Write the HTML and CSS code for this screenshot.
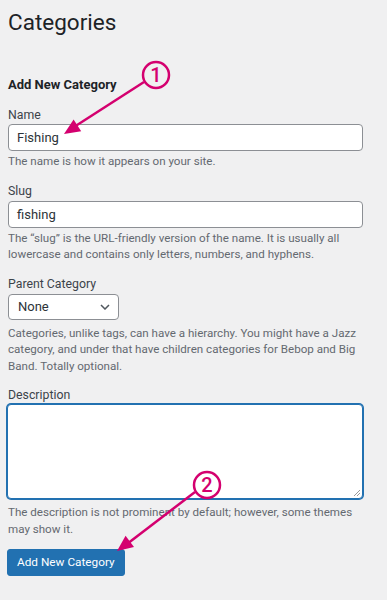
FILE: index.html
```html
<!DOCTYPE html>
<html>
<head>
<meta charset="utf-8">
<link rel="stylesheet" href="styles.css">
</head>
<body>
<div class="page">
  <h1 class="title">Categories</h1>
  <h2 class="subtitle">Add New Category</h2>
  <div class="field">
    <label class="label">Name</label>
    <div class="input">Fishing</div>
    <p class="help">The name is how it appears on your site.</p>
  </div>
  <div class="field">
    <label class="label">Slug</label>
    <div class="input">fishing</div>
    <p class="help">The “slug” is the URL-friendly version of the name. It is usually all lowercase and contains only letters, numbers, and hyphens.</p>
  </div>
  <div class="field">
    <label class="label">Parent Category</label>
    <div class="select"><span>None</span>
      <svg class="chev" width="10" height="6" viewBox="0 0 10 6"><path d="M1 1 L5 5 L9 1" fill="none" stroke="#50575e" stroke-width="1.5"/></svg>
    </div>
    <p class="help help-loose">Categories, unlike tags, can have a hierarchy. You might have a Jazz category, and under that have children categories for Bebop and Big Band. Totally optional.</p>
  </div>
  <div class="field">
    <label class="label">Description</label>
    <div class="textarea">
      <svg class="grip" width="8" height="8" viewBox="0 0 8 8"><path d="M7 1 L1 7 M7 4 L4 7" stroke="#9a9a9a" stroke-width="1"/></svg>
    </div>
    <p class="help help-loose">The description is not prominent by default; however, some themes may show it.</p>
  </div>
  <button class="btn">Add New Category</button>
</div>
<svg class="annot" width="387" height="600" viewBox="0 0 387 600">
  <g fill="none" stroke="#d4006f" stroke-width="2.5">
    <circle cx="156" cy="75" r="13"/>
    <line x1="144" y1="82" x2="74" y2="127"/>
    <circle cx="207" cy="485" r="13"/>
    <line x1="195" y1="492" x2="127" y2="544"/>
  </g>
  <g fill="#d4006f">
    <polygon points="64,134 73.6,119.5 81.2,131.3"/>
    <polygon points="117,551 125.6,535.8 134,547"/>
  </g>
  <text x="156" y="82" class="num">1</text>
  <text x="207" y="492" class="num">2</text>
</svg>
</body>
</html>
```
FILE: styles.css
```css
html, body { margin: 0; padding: 0; background: #f0f0f1; }
body { width: 387px; height: 600px; overflow: hidden; position: relative; font-family: Roboto, "Noto Sans", sans-serif; }
.page { padding: 7px 8px 0; }
.title { margin: 0; font-size: 22.5px; font-weight: 400; color: #1d2327; line-height: 30px; }
.subtitle { margin: 38px 0 0; font-size: 13px; font-weight: 700; color: #1d2327; line-height: 20px; }
.field { margin-top: 11px; }
.field + .field { margin-top: 12px; }
.label { display: block; font-size: 12.3px; color: #3c434a; line-height: 18px; }
.input { box-sizing: border-box; width: 355px; height: 27px; border: 1px solid #8c8f94; border-radius: 4px; background: #fff; font-size: 13px; color: #2c3338; line-height: 25px; padding-left: 8px; }
.field + .field .input { margin-top: 1px; }
.help { margin: 2px 0 0; font-size: 11.6px; color: #646970; line-height: 16.5px; width: 362px; }
.help-loose { margin-top: 5px; }
.select { box-sizing: border-box; width: 111px; height: 26px; margin-top: 1px; border: 1px solid #8c8f94; border-radius: 4px; background: #fff; font-size: 13px; color: #2c3338; line-height: 24px; padding: 0 8px 0 9px; display: flex; justify-content: space-between; align-items: center; }
.textarea { box-sizing: border-box; position: relative; width: 356px; height: 95px; margin-left: -1px; border: 1px solid #2271b1; box-shadow: 0 0 0 1px #2271b1; border-radius: 4px; background: #fff; }
.grip { position: absolute; right: 1px; bottom: 1px; }
.btn { display: block; margin: 12px 0 0 -1px; height: 27px; padding: 0 9px; border: 1px solid #2271b1; border-radius: 3px; background: #2271b1; color: #fff; font-family: inherit; font-size: 11.8px; line-height: 25px; }
.annot { position: absolute; left: 0; top: 0; pointer-events: none; }
.num { font-family: Roboto, sans-serif; font-size: 20px; fill: #d4006f; text-anchor: middle; font-weight: 500; }
```
